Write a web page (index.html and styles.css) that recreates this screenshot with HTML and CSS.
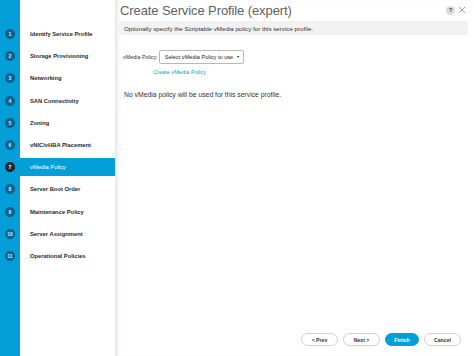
FILE: index.html
```html
<!DOCTYPE html>
<html lang="en">
<head>
    <meta charset="UTF-8">
    <meta name="viewport" content="width=device-width, initial-scale=1.0">
    <title>Create Service Profile (expert)</title>
    <link rel="stylesheet" href="styles.css">
</head>
<body>

<div class="app">
    <ul class="steps">
        <li class="step"><span class="num">1</span><span class="label">Identify Service Profile</span></li>
        <li class="step"><span class="num">2</span><span class="label">Storage Provisioning</span></li>
        <li class="step"><span class="num">3</span><span class="label">Networking</span></li>
        <li class="step"><span class="num">4</span><span class="label">SAN Connectivity</span></li>
        <li class="step"><span class="num">5</span><span class="label">Zoning</span></li>
        <li class="step"><span class="num">6</span><span class="label">vNIC/vHBA Placement</span></li>
        <li class="step active"><span class="num">7</span><span class="label">vMedia Policy</span></li>
        <li class="step"><span class="num">8</span><span class="label">Server Boot Order</span></li>
        <li class="step"><span class="num">9</span><span class="label">Maintenance Policy</span></li>
        <li class="step"><span class="num">10</span><span class="label">Server Assignment</span></li>
        <li class="step"><span class="num">11</span><span class="label">Operational Policies</span></li>
    </ul>

    <div class="wizard">
        <div class="header">
            <h1 class="title">Create Service Profile (expert)</h1>
            <div class="tools">
                <span class="help">?</span>
                <svg class="close" width="8" height="8" viewBox="0 0 8 8">
                    <path d="M1 1 L7 7 M7 1 L1 7" stroke="#8a8a8a" stroke-width="0.8" fill="none"/>
                </svg>
            </div>
        </div>

        <div class="info">Optionally specify the Scriptable vMedia policy for this service profile.</div>

        <div class="field">
            <span class="field-label">vMedia Policy:</span>
            <span class="select">Select vMedia Policy to use <span class="caret">&#9660;</span></span>
        </div>
        <a class="link" href="#">Create vMedia Policy</a>

        <p class="note">No vMedia policy will be used for this service profile.</p>

        <div class="footer">
            <button class="btn">&lt; Prev</button>
            <button class="btn">Next &gt;</button>
            <button class="btn primary">Finish</button>
            <button class="btn">Cancel</button>
        </div>
    </div>
</div>

</body>
</html>
```

FILE: styles.css
```css
body {
    margin: 0;
    font-family: "Liberation Sans", Arial, sans-serif;
    background-color: #fff;
}

.app {
    display: flex;
    width: 474px;
    height: 356px;
}

/* left wizard steps */
.steps {
    list-style: none;
    margin: 0;
    padding: 25px 0 0 0;
    width: 115px;
    background: linear-gradient(to right, #049fd9 20px, #fff 20px);
}

.step {
    display: flex;
    align-items: center;
    height: 18px;
    margin-bottom: 4.2px;
}

.num {
    width: 20px;
    height: 10px;
    display: flex;
    justify-content: center;
    font-size: 5px;
    font-weight: bold;
    line-height: 10px;
    color: #d6ecf6;
    background-image: radial-gradient(circle at center, #0b6391 4.8px, transparent 5.3px);
}

.step.active .num {
    background-image: radial-gradient(circle at center, #1f2a33 4.8px, transparent 5.3px);
    color: #fff;
}

.label {
    flex: 1;
    height: 100%;
    display: flex;
    align-items: center;
    padding-left: 10px;
    font-size: 5.8px;
    font-weight: bold;
    color: #2a2a2a;
}

.step.active .label {
    background-color: #049fd9;
    color: #fff;
    font-weight: normal;
}

/* main panel */
.wizard {
    flex: 1;
    display: flex;
    flex-direction: column;
    box-shadow: inset 5px 0 5px -3px rgba(0, 0, 0, 0.12);
    padding: 0 6px 10px 4px;
}

.header {
    display: flex;
    align-items: center;
    justify-content: space-between;
    height: 20px;
}

.title {
    margin: 0 0 0 1px;
    font-size: 13px;
    letter-spacing: -0.1px;
    font-weight: normal;
    color: #606060;
}

.tools {
    display: flex;
    align-items: center;
    gap: 3px;
    margin-right: 2px;
}

.help {
    width: 9px;
    height: 9px;
    border-radius: 50%;
    background-color: #dcdcdc;
    color: #444;
    font-size: 6px;
    font-weight: bold;
    display: flex;
    align-items: center;
    justify-content: center;
}

.info {
    margin-top: 1px;
    height: 14px;
    background-color: #f2f2f2;
    display: flex;
    align-items: center;
    padding-left: 5px;
    font-size: 6.2px;
    color: #333;
}

.field {
    display: flex;
    align-items: center;
    margin-top: 15px;
    padding-left: 4px;
    font-size: 5.6px;
    color: #333;
    white-space: nowrap;
}

.field-label {
    font-size: 5.4px;
    margin-right: 1px;
}

.select {
    width: 78px;
    height: 12px;
    border: 1px solid #b8b8b8;
    border-radius: 2px;
    display: flex;
    align-items: center;
    padding-left: 5px;
    color: #222;
}

.caret {
    font-size: 3.5px;
    margin-left: 3px;
}

.link {
    margin: 5px 0 0 34px;
    font-size: 5.6px;
    color: #049fd9;
    text-decoration: none;
}

.note {
    margin: 16px 0 0 5px;
    font-size: 6.8px;
    color: #333;
}

.footer {
    margin-top: auto;
    display: flex;
    justify-content: flex-end;
    gap: 5px;
    padding-right: 7px;
}

.btn {
    width: 37px;
    height: 13px;
    border: 1px solid #d0d0d0;
    border-radius: 7px;
    background-color: #fff;
    font-family: "Liberation Sans", Arial, sans-serif;
    font-size: 5.2px;
    font-weight: bold;
    color: #333;
    padding: 0;
}

.btn.primary {
    width: 34px;
    background-color: #049fd9;
    border-color: #049fd9;
    color: #fff;
}
```
